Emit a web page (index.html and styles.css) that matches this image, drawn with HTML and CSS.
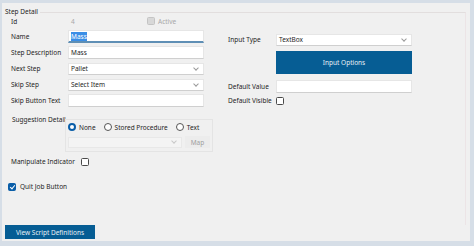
FILE: index.html
```html
<!DOCTYPE html>
<html lang="en">

<head>
    <meta charset="UTF-8">
    <meta name="viewport" content="width=device-width, initial-scale=1.0">
    <title>Step Detail</title>
    <link rel="stylesheet" href="styles.css">
</head>

<body>
    <div class="window">
        <div class="group">
            <div class="group-title">Step Detail</div>

            <div class="columns">
                <div class="col-left">
                    <div class="row row-id">
                        <span class="label">Id</span>
                        <span class="id-value">4</span>
                        <span class="active">
                            <span class="check disabled"></span>
                            <span class="active-text">Active</span>
                        </span>
                    </div>
                    <div class="row">
                        <span class="label">Name</span>
                        <div class="field focused"><span class="selected">Mass</span></div>
                    </div>
                    <div class="row">
                        <span class="label">Step Description</span>
                        <div class="field">Mass</div>
                    </div>
                    <div class="row">
                        <span class="label">Next Step</span>
                        <div class="field select">Pallet<span class="chev"></span></div>
                    </div>
                    <div class="row">
                        <span class="label">Skip Step</span>
                        <div class="field select">Select Item<span class="chev"></span></div>
                    </div>
                    <div class="row">
                        <span class="label">Skip Button Text</span>
                        <div class="field"></div>
                    </div>

                    <div class="suggestion">
                        <span class="sugg-label">Suggestion Detail</span>
                        <div class="sugg-box">
                            <div class="radios">
                                <span class="radio on"></span><span class="radio-text">None</span>
                                <span class="radio"></span><span class="radio-text">Stored Procedure</span>
                                <span class="radio"></span><span class="radio-text">Text</span>
                            </div>
                            <div class="sugg-row">
                                <div class="field select off"><span class="chev"></span></div>
                                <span class="map-btn">Map</span>
                            </div>
                        </div>
                    </div>

                    <div class="manip">
                        <span>Manipulate Indicator</span>
                        <span class="check"></span>
                    </div>

                    <div class="quit">
                        <span class="check checked"></span>
                        <span>Quit Job Button</span>
                    </div>
                </div>

                <div class="col-right">
                    <div class="row">
                        <span class="label">Input Type</span>
                        <div class="field select">TextBox<span class="chev"></span></div>
                    </div>
                    <div class="row row-btn">
                        <span class="label"></span>
                        <div class="primary-btn">Input Options</div>
                    </div>
                    <div class="row">
                        <span class="label">Default Value</span>
                        <div class="field"></div>
                    </div>
                    <div class="row row-check">
                        <span class="label">Default Visible</span>
                        <span class="check"></span>
                    </div>
                </div>
            </div>
        </div>

        <div class="footer">
            <div class="script-btn">View Script Definitions</div>
        </div>
    </div>
</body>

</html>
```

FILE: styles.css
```css
* {
    margin: 0;
    padding: 0;
    box-sizing: border-box;
}

body {
    font-family: 'Noto Sans', 'Open Sans', sans-serif;
    font-size: 6.5px;
    color: #1e1e1e;
    background: #d6dee7;
}

.window {
    width: 474px;
    height: 246px;
    background: #f0f0f0;
    border-top: 3px solid #d6dee7;
    border-left: 2px solid #d6dee7;
    border-right: 4px solid #d6dee7;
    border-bottom: 5px solid #d6dee7;
    display: flex;
    flex-direction: column;
}

/* group box */
.group {
    position: relative;
    margin: 9px 4px 0 3px;
    border-top: 1px solid #e2dede;
    border-right: 1px solid #ece4e6;
    flex: 1;
}

.group-title {
    position: absolute;
    top: -5px;
    left: 0;
    padding-right: 2px;
    background: #f0f0f0;
    line-height: 8px;
}

.columns {
    display: flex;
    padding: 2px 0 0 6px;
}

.col-left {
    width: 217px;
}

.col-right {
    padding-top: 18px;
}

.row {
    display: flex;
    align-items: center;
    height: 13px;
    margin-bottom: 3px;
}

.label {
    width: 57px;
    flex-shrink: 0;
    white-space: nowrap;
}

.col-right .label {
    width: 48px;
}

.row-id {
    height: 12px;
}

.id-value {
    width: 79px;
    padding-left: 3px;
    color: #a8a8a8;
}

.active {
    display: flex;
    align-items: center;
    gap: 3px;
    color: #a8a8a8;
}

.field {
    position: relative;
    width: 136px;
    height: 13px;
    background: #fff;
    border: 1px solid #e6e6e6;
    border-bottom-color: #cfcfcf;
    padding-left: 2px;
    display: flex;
    align-items: center;
}

.field.focused {
    border-bottom: 2px solid #5f8fb5;
    padding-top: 1px;
}

.selected {
    background: #3a8ee6;
    color: #fff;
}

.select {
    height: 12px;
}

.chev {
    position: absolute;
    right: 5px;
    top: 2px;
    width: 4px;
    height: 4px;
    border-right: 1px solid #9a9a9a;
    border-bottom: 1px solid #9a9a9a;
    transform: rotate(45deg);
}

/* suggestion detail */
.suggestion {
    display: flex;
    margin-top: 12px;
    padding-left: 1px;
}

.sugg-label {
    width: 53px;
    white-space: nowrap;
    margin-top: -4px;
}

.sugg-box {
    width: 148px;
    height: 33px;
    border: 1px solid #e4e4e4;
    padding: 2px 0 0 2px;
}

.radios {
    display: flex;
    align-items: center;
    height: 10px;
}

.radio {
    width: 8px;
    height: 8px;
    border: 1px solid #555;
    border-radius: 50%;
    background: #fff;
}

.radio.on {
    border: 2.5px solid #0a5ea8;
}

.radio-text {
    margin: 0 8px 0 3px;
}

.sugg-row {
    display: flex;
    align-items: center;
    margin-top: 4px;
    gap: 3px;
}

.sugg-row .field {
    width: 114px;
    height: 11px;
    background: #f4f4f4;
    border-color: #e8e8e8;
}

.sugg-row .chev {
    border-color: #c8c8c8;
    top: 1px;
}

.map-btn {
    width: 25px;
    height: 12px;
    display: flex;
    align-items: center;
    justify-content: center;
    color: #a0a0a0;
    background: #ececec;
}

/* checkboxes */
.check {
    display: inline-block;
    width: 8px;
    height: 8px;
    border: 1px solid #4a4a4a;
    border-radius: 1.5px;
    background: #fff;
}

.check.disabled {
    border-color: #c4c4c4;
    background: #d8d8d8;
}

.check.checked {
    position: relative;
    border-color: #0a5ea8;
    background: #0a5ea8;
}

.check.checked::after {
    content: "";
    position: absolute;
    left: 1.5px;
    top: 0;
    width: 2px;
    height: 4px;
    border-right: 1px solid #fff;
    border-bottom: 1px solid #fff;
    transform: rotate(40deg);
}

.manip {
    display: flex;
    align-items: center;
    gap: 6px;
    margin-top: 5px;
}

.quit {
    display: flex;
    align-items: center;
    gap: 4px;
    margin-top: 16px;
    margin-left: -3px;
}

/* right column */
.row-btn {
    height: 23px;
    margin-bottom: 6px;
    margin-top: 5px;
}

.primary-btn {
    width: 136px;
    height: 23px;
    background: #065d94;
    color: #e8f0f6;
    display: flex;
    align-items: center;
    justify-content: center;
}

.row-check {
    margin-top: -2px;
}

/* footer */
.footer {
    padding: 0 0 2px 3px;
}

.script-btn {
    width: 90px;
    height: 14px;
    background: #065d94;
    color: #e8f0f6;
    display: flex;
    align-items: center;
    justify-content: center;
}
```
